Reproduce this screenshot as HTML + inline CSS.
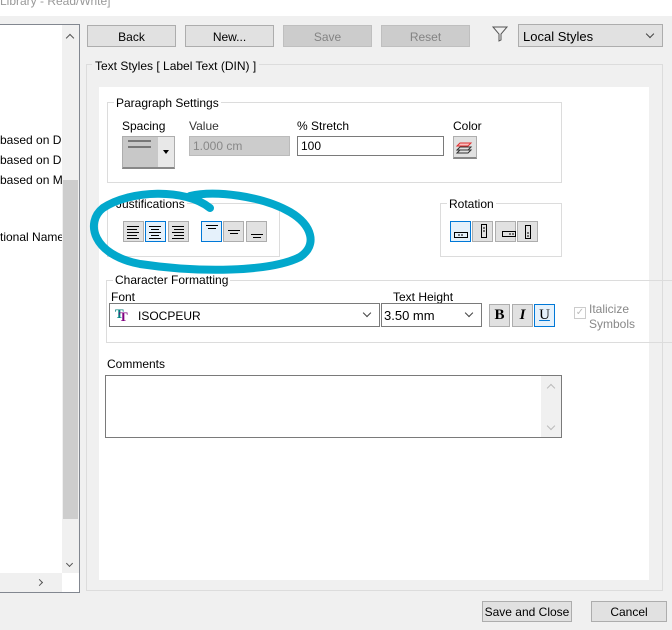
<!DOCTYPE html>
<html><head><style>
*{box-sizing:border-box;margin:0;padding:0}
body{width:672px;height:630px;overflow:hidden;background:#f0f0f0;font-family:"Liberation Sans",sans-serif;font-size:12px;color:#000;position:relative}
.a{position:absolute}
.btn{position:absolute;background:#e1e1e1;border:1px solid #adadad;text-align:center;line-height:22px;font-size:12px}
.dis{background:#ccc;border-color:#bfbfbf;color:#838383}
.box{position:absolute;border:1px solid #dcdcdc}
.lbl{position:absolute;background:#fff;padding:0 2px;line-height:13px}
.tb{position:absolute;background:#e1e1e1;border:1px solid #adadad}
.sel{background:#e5f1fb;border-color:#0078d7}
.ln{position:absolute;height:1px;background:#000}
.chev{position:absolute;width:6px;height:6px;border-right:1px solid #444;border-bottom:1px solid #444;transform:rotate(45deg)}
</style></head><body>
<div class="a" style="left:0;top:0;width:672px;height:16px;background:#fff"></div>
<div class="a" style="left:0;top:-6px;color:#999;font-size:12px">Library - Read/Write]</div>
<!-- left list -->
<div class="a" style="left:0;top:24px;width:80px;height:569px;background:#fff;border:1px solid #828790;border-left:none"></div>
<div class="a" style="left:62px;top:25px;width:17px;height:548px;background:#f0f0f0"></div>
<div class="a" style="left:63px;top:180px;width:15px;height:339px;background:#cdcdcd"></div>
<div class="a" style="left:0;top:573px;width:62px;height:19px;background:#f0f0f0"></div>
<div class="chev" style="left:67px;top:35px;transform:rotate(225deg);border-color:#555"></div>
<div class="chev" style="left:67px;top:561px;border-color:#555;width:5px;height:5px"></div>
<div class="chev" style="left:37px;top:580px;transform:rotate(-45deg);border-color:#555;width:5px;height:5px"></div>
<div class="a" style="left:0;top:130px;line-height:20px;width:62px;overflow:hidden;white-space:nowrap">based on D<br>based on D<br>based on M</div>
<div class="a" style="left:0;top:230px;width:62px;overflow:hidden;white-space:nowrap">tional Name</div>
<!-- top buttons -->
<div class="btn" style="left:87px;top:25px;width:89px;height:22px">Back</div>
<div class="btn" style="left:185px;top:25px;width:89px;height:22px">New...</div>
<div class="btn dis" style="left:283px;top:25px;width:89px;height:22px">Save</div>
<div class="btn dis" style="left:381px;top:25px;width:89px;height:22px">Reset</div>
<svg class="a" style="left:490px;top:25px" width="20" height="18"><path d="M3 2H17L11 9V15L9 16V9Z" fill="none" stroke="#555"/></svg>
<div class="a" style="left:518px;top:24px;width:145px;height:23px;background:#e1e1e1;border:1px solid #adadad;padding-left:4px;line-height:23px;font-size:13px">Local Styles</div>
<div class="chev" style="left:647px;top:31px"></div>
<!-- group -->
<div class="a" style="left:86px;top:64px;width:577px;height:527px;border:1px solid #dcdcdc"></div>
<div class="a" style="left:92px;top:59px;background:#f0f0f0;padding:0 3px;font-size:12px">Text Styles [ Label Text (DIN) ]</div>
<div class="a" style="left:99px;top:87px;width:550px;height:493px;background:#fff"></div>
<!-- paragraph -->
<div class="box" style="left:107px;top:102px;width:455px;height:81px"></div>
<div class="lbl" style="left:114px;top:97px">Paragraph Settings</div>
<div class="a" style="left:122px;top:119px">Spacing</div>
<div class="a" style="left:189px;top:119px;color:#333">Value</div>
<div class="a" style="left:297px;top:119px">% Stretch</div>
<div class="a" style="left:453px;top:119px">Color</div>
<div class="a" style="left:122px;top:136px;width:53px;height:33px;background:#c8c8c8;border:1px solid #adadad;border-bottom:2px solid #888"></div>
<div class="a" style="left:158px;top:137px;width:16px;height:30px;background:#e8e8e8"></div>
<div class="ln" style="left:128px;top:140px;width:23px;height:2px;background:#777"></div>
<div class="ln" style="left:128px;top:146px;width:23px;height:2px;background:#777"></div>
<div class="a" style="left:163px;top:150px;border:3px solid transparent;border-top:4px solid #000"></div>
<div class="a" style="left:189px;top:136px;width:101px;height:20px;background:#ccc;border:1px solid #bbb;color:#888;padding-left:3px;line-height:19px">1.000 cm</div>
<div class="a" style="left:297px;top:136px;width:147px;height:20px;border:1px solid #7a7a7a;padding-left:3px;line-height:19px">100</div>
<div class="a" style="left:453px;top:136px;width:24px;height:23px;background:#e1e1e1;border:1px solid #adadad;border-bottom:2px solid #888"></div>
<svg class="a" style="left:456px;top:140px" width="18" height="16"><path d="M4 3H15L12 6H1Z" fill="#f8c0c0" stroke="#e03030"/><path d="M4 7H15L12 10H1ZM4 10H15L12 13H1Z" fill="none" stroke="#333"/></svg>
<!-- justification -->
<div class="box" style="left:107px;top:203px;width:173px;height:54px"></div>
<div class="lbl" style="left:114px;top:198px">Justifications</div>
<div class="tb" style="left:123px;top:221px;width:21px;height:21px"></div>
<div class="tb sel" style="left:145px;top:221px;width:21px;height:21px"></div>
<div class="tb" style="left:168px;top:221px;width:21px;height:21px"></div>
<div class="tb sel" style="left:201px;top:221px;width:21px;height:21px"></div>
<div class="tb" style="left:223px;top:221px;width:21px;height:21px"></div>
<div class="tb" style="left:246px;top:221px;width:21px;height:21px"></div>
<svg class="a" style="left:123px;top:221px" width="150" height="21" stroke="#000" stroke-width="1">
<path d="M4 5.5H16M4 8.5H14M4 11.5H16M4 14.5H14M4 17.5H16"/>
<path d="M26 5.5H38M28 8.5H36M26 11.5H38M28 14.5H36M26 17.5H38"/>
<path d="M49 5.5H61M51 8.5H61M49 11.5H61M51 14.5H61M49 17.5H61"/>
<path d="M83 4.5H95M85 7.5H93"/>
<path d="M105 9.5H117M107 12.5H115"/>
<path d="M128 13.5H140M130 16.5H138"/>
</svg>
<!-- rotation -->
<div class="box" style="left:440px;top:203px;width:122px;height:54px"></div>
<div class="lbl" style="left:447px;top:198px">Rotation</div>
<div class="tb sel" style="left:450px;top:221px;width:21px;height:21px"></div>
<div class="tb" style="left:472px;top:221px;width:21px;height:21px"></div>
<div class="tb" style="left:495px;top:221px;width:21px;height:21px"></div>
<div class="tb" style="left:517px;top:221px;width:21px;height:21px"></div>
<svg class="a" style="left:450px;top:221px" width="90" height="21" fill="none" stroke="#000">
<rect x="4.5" y="11.5" width="13" height="5"/><path d="M8 14h2M11 14h2" />
<rect x="31.5" y="3.5" width="5" height="13"/><path d="M34 6v2M34 9v2"/>
<rect x="52.5" y="10.5" width="13" height="5"/><path d="M59 13h2M62 13h2"/>
<rect x="75.5" y="4.5" width="5" height="13"/><path d="M78 11v2M78 14v2"/>
</svg>
<!-- circle annotation -->
<svg class="a" style="left:0;top:0" width="672" height="630"><path d="M210 208 C185 188 130 190 103 208 C85 222 92 255 140 264 C200 273 270 272 300 257 C318 245 312 225 290 212 C262 196 215 190 190 196" fill="none" stroke="#02a8cc" stroke-width="8" stroke-linecap="round"/></svg>
<!-- character formatting -->
<div class="a" style="left:106px;top:280px;width:567px;height:63px;border:1px solid #dcdcdc;border-right:none"></div>
<div class="lbl" style="left:113px;top:274px">Character Formatting</div>
<div class="a" style="left:111px;top:290px">Font</div>
<div class="a" style="left:393px;top:290px">Text Height</div>
<div class="a" style="left:109px;top:303px;width:271px;height:24px;border:1px solid #7a7a7a;line-height:24px;padding-left:28px">ISOCPEUR</div>
<div class="chev" style="left:364px;top:310px"></div>
<div class="a" style="left:115px;top:306px;font-family:'Liberation Serif',serif;font-weight:bold;font-size:13px;color:#008080">T</div>
<div class="a" style="left:119px;top:309px;font-family:'Liberation Serif',serif;font-weight:bold;font-size:13px;color:#800080">T</div>
<div class="a" style="left:381px;top:303px;width:101px;height:24px;border:1px solid #7a7a7a;line-height:24px;padding-left:2px;font-size:13px">3.50 mm</div>
<div class="chev" style="left:466px;top:310px"></div>
<div class="tb" style="left:489px;top:304px;width:21px;height:23px;text-align:center;font:bold 15px 'Liberation Serif',serif;line-height:21px">B</div>
<div class="tb" style="left:512px;top:304px;width:21px;height:23px;text-align:center;font:italic bold 15px 'Liberation Serif',serif;line-height:21px">I</div>
<div class="tb sel" style="left:534px;top:304px;width:21px;height:23px;text-align:center;font:15px 'Liberation Serif',serif;line-height:21px;text-decoration:underline;text-decoration-color:#0078d7">U</div>
<div class="a" style="left:574px;top:307px;width:12px;height:12px;border:1px solid #ccc;color:#bbb;font-size:10px;line-height:10px;text-align:center">&#10003;</div>
<div class="a" style="left:589px;top:302px;color:#888;line-height:15px">Italicize<br>Symbols</div>
<!-- comments -->
<div class="a" style="left:107px;top:357px">Comments</div>
<div class="a" style="left:105px;top:375px;width:457px;height:63px;border:1px solid #7a7a7a"></div>
<div class="a" style="left:541px;top:376px;width:20px;height:61px;background:#f0f0f0"></div>
<div class="chev" style="left:548px;top:385px;transform:rotate(225deg);border-color:#bbb"></div>
<div class="chev" style="left:548px;top:423px;border-color:#bbb"></div>
<!-- bottom -->
<div class="btn" style="left:482px;top:601px;width:90px;height:21px;line-height:21px">Save and Close</div>
<div class="btn" style="left:591px;top:601px;width:76px;height:21px;line-height:21px">Cancel</div>
</body></html>
